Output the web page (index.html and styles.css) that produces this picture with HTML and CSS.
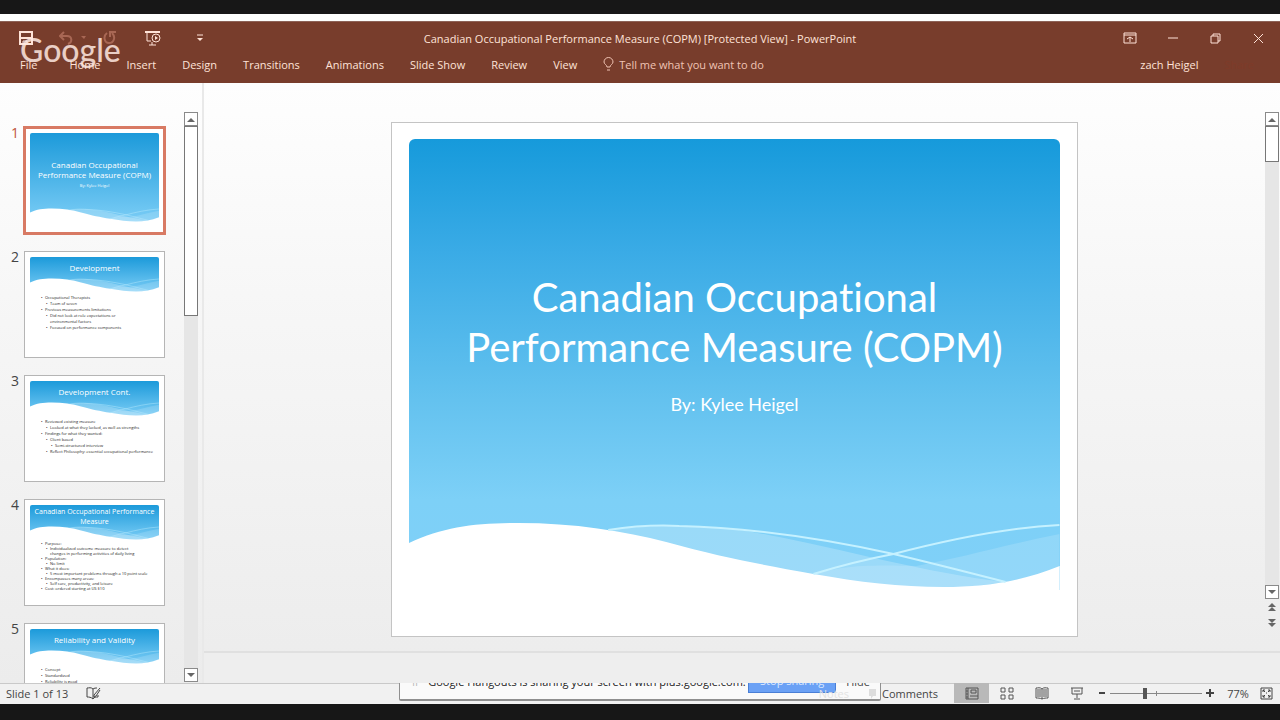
FILE: index.html
```html
<!DOCTYPE html>
<html lang="en">
<head>
    <meta charset="utf-8">
    <title>Canadian Occupational Performance Measure (COPM) - PowerPoint</title>
    <link rel="stylesheet" href="styles.css">
</head>
<body>
    <!-- shared wave at the bottom of every slide banner -->
    <svg class="defs" width="0" height="0" aria-hidden="true">
        <symbol id="wave" viewBox="0 0 650 70" preserveAspectRatio="none">
            <path fill="#ffffff" fill-opacity=".22" d="M199 10C240 5 300 3 359 15C430 28 520 54 596 62L534 70H404Z"/>
            <path fill="#ffffff" fill-opacity=".15" d="M404 54C430 47 450 44 507 46C551 38 600 24 650 14V50L560 70H404Z"/>
            <path fill="#ffffff" d="M-2 24L0 23C35 7 65 3 109 3C165 3 215 11 257 22C315 38 350 44 404 54C450 62 490 67 534 67C575 67 610 62 650 46L653 45V72H-2Z"/>
            <path class="wave-line" d="M199 10C225 6 250 5 270 6C350 8 420 20 484 34C530 45 565 54 596 62"/>
            <path class="wave-line" d="M404 54C430 46 458 39 484 34C530 22 590 8 650 5"/>
        </symbol>
    </svg>

    <header class="ribbon">
        <div class="title-bar">
            <div class="quick-access">
                <button aria-label="Save"><svg width="14" height="14" viewBox="0 0 14 14"><path class="heavy" d="M1 1h12v12H1zM1 7h12"/><path d="M4 13v-3h4v3"/></svg></button>
                <button class="dim" aria-label="Undo"><svg width="28" height="14" viewBox="0 0 28 14"><path class="heavy" d="M5 1L1 5l4 4M2 5h6c5 0 6 6 1 8"/><path class="solid" d="M22 5h5l-2 3z"/></svg></button>
                <button class="dim" aria-label="Redo"><svg width="14" height="14" viewBox="0 0 14 14"><path class="heavy" d="M4 2C0 5 1 12 6 12s7-6 3-10M7 6V1h6"/></svg></button>
                <button aria-label="Start from beginning"><svg width="16" height="15" viewBox="0 0 16 15"><path class="heavy" d="M0 1h15"/><path d="M2 1v9h4M4 14h7M7 11v3"/><circle cx="11" cy="7" r="4"/><path class="solid" d="M10 5l3 2-3 2z"/></svg></button>
                <button aria-label="Customize toolbar"><svg width="6" height="8" viewBox="0 0 6 8"><path d="M0 1h6"/><path class="solid" d="M0 4h6L3 7z"/></svg></button>
            </div>
            <h1>Canadian Occupational Performance Measure (COPM) [Protected View] - PowerPoint</h1>
            <div class="window-buttons">
                <button aria-label="Ribbon options"><svg width="14" height="12" viewBox="0 0 14 12"><path d="M1 1h12v10H1zM1 3h12M7 10V5M4 7l3-2 3 2"/></svg></button>
                <button aria-label="Minimize"><svg width="10" height="10" viewBox="0 0 10 10"><path d="M0 5h10"/></svg></button>
                <button aria-label="Restore"><svg width="11" height="11" viewBox="0 0 11 11"><path d="M1 3h7v7H1zM3 3V1h7v7H8"/></svg></button>
                <button aria-label="Close"><svg width="11" height="11" viewBox="0 0 11 11"><path d="M1 1l9 9M10 1l-9 9"/></svg></button>
            </div>
        </div>
        <nav class="tabs">
            <button class="file">File</button>
            <button>Home</button>
            <button>Insert</button>
            <button>Design</button>
            <button>Transitions</button>
            <button>Animations</button>
            <button>Slide Show</button>
            <button>Review</button>
            <button>View</button>
            <button class="tell-me"><svg width="11" height="14" viewBox="0 0 11 14"><path d="M4 10C4 8 1 7 1 5a4 4 0 0 1 9 0c0 2-3 3-3 5zM4 13h3"/></svg>Tell me what you want to do</button>
            <span class="account">zach Heigel</span>
            <button class="share">Share</button>
        </nav>
        <div class="watermark">Google</div>
    </header>

    <main class="workspace">
        <aside class="slides-panel">
            <ol class="thumbs">
                <li class="active">
                    <span>1</span>
                    <div class="thumb">
                        <div class="banner cover">
                            <h3>Canadian Occupational Performance Measure (COPM)</h3>
                            <p>By: Kylee Heigel</p>
                            <svg class="wave"><use href="#wave"/></svg>
                        </div>
                    </div>
                </li>
                <li>
                    <span>2</span>
                    <div class="thumb">
                        <div class="banner">
                            <h3>Development</h3>
                            <svg class="wave"><use href="#wave"/></svg>
                        </div>
                        <ul>
                            <li>Occupational Therapists
                                <ul><li>Team of seven</li></ul>
                            </li>
                            <li>Previous measurements limitations
                                <ul>
                                    <li>Did not look at role expectations or environmental factors</li>
                                    <li>Focused on performance components</li>
                                </ul>
                            </li>
                        </ul>
                    </div>
                </li>
                <li>
                    <span>3</span>
                    <div class="thumb">
                        <div class="banner">
                            <h3>Development Cont.</h3>
                            <svg class="wave"><use href="#wave"/></svg>
                        </div>
                        <ul>
                            <li>Reviewed existing measure
                                <ul><li>Looked at what they lacked, as well as strengths</li></ul>
                            </li>
                            <li>Findings for what they wanted:
                                <ul>
                                    <li>Client based
                                        <ul><li>Semi-structured interview</li></ul>
                                    </li>
                                    <li class="wide">Reflect Philosophy: essential occupational performance</li>
                                </ul>
                            </li>
                        </ul>
                    </div>
                </li>
                <li>
                    <span>4</span>
                    <div class="thumb dense">
                        <div class="banner">
                            <h3>Canadian Occupational Performance Measure</h3>
                            <svg class="wave"><use href="#wave"/></svg>
                        </div>
                        <ul>
                            <li>Purpose:
                                <ul><li>Individualized outcome measure to detect changes in performing activities of daily living</li></ul>
                            </li>
                            <li>Population:
                                <ul><li>No limit</li></ul>
                            </li>
                            <li>What it does:
                                <ul><li class="wide">5 most important problems through a 10 point scale</li></ul>
                            </li>
                            <li>Encompasses many areas:
                                <ul><li>Self care, productivity, and leisure</li></ul>
                            </li>
                            <li>Cost: ordered starting at US $10</li>
                        </ul>
                    </div>
                </li>
                <li>
                    <span>5</span>
                    <div class="thumb">
                        <div class="banner">
                            <h3>Reliability and Validity</h3>
                            <svg class="wave"><use href="#wave"/></svg>
                        </div>
                        <ul>
                            <li>Concept</li>
                            <li>Standardized</li>
                            <li>Reliability is good</li>
                        </ul>
                    </div>
                </li>
            </ol>
            <div class="scrollbar">
                <button aria-label="Scroll up"><svg width="8" height="5" viewBox="0 0 8 5"><path d="M0 5l4-4 4 4z"/></svg></button>
                <div class="scroll-thumb"></div>
                <button class="down" aria-label="Scroll down"><svg width="8" height="5" viewBox="0 0 8 5"><path d="M0 0l4 4 4-4z"/></svg></button>
            </div>
        </aside>

        <section class="editor">
            <div class="stage">
                <article class="slide">
                    <div class="banner cover">
                        <h2>Canadian Occupational<br>Performance Measure (COPM)</h2>
                        <p>By: Kylee Heigel</p>
                        <svg class="wave"><use href="#wave"/></svg>
                    </div>
                </article>
            </div>
            <div class="stage-scroll">
                <div class="scrollbar">
                    <button aria-label="Scroll up"><svg width="8" height="5" viewBox="0 0 8 5"><path d="M0 5l4-4 4 4z"/></svg></button>
                    <div class="scroll-thumb"></div>
                    <button class="down" aria-label="Scroll down"><svg width="8" height="5" viewBox="0 0 8 5"><path d="M0 0l4 4 4-4z"/></svg></button>
                </div>
                <button aria-label="Previous slide"><svg width="8" height="8" viewBox="0 0 8 8"><path d="M0 4l4-4 4 4zM0 8l4-4 4 4z"/></svg></button>
                <button aria-label="Next slide"><svg width="8" height="8" viewBox="0 0 8 8"><path d="M0 0l4 4 4-4zM0 4l4 4 4-4z"/></svg></button>
            </div>
            <div class="notes"></div>
        </section>
    </main>

    <footer class="status-bar">
        <span>Slide 1 of 13</span>
        <button class="spelling" aria-label="Spelling"><svg width="15" height="13" viewBox="0 0 15 13"><path d="M7 2C5 0 3 1 1 1v9c2 0 4 0 6 2V2c1-1 3-1 4-1M7 12c1-2 3-2 5-2V8"/><path d="M14 1L8 8v2l2-1 4-6"/></svg></button>

        <div class="share-popup">
            <span class="grip">II</span>
            <span class="message">Google Hangouts is sharing your screen with plus.google.com.</span>
            <button class="stop">Stop sharing</button>
            <a href="#">Hide</a>
        </div>

        <div class="status-tools">
            <button class="notes-button">Notes</button>
            <button class="comments"><svg width="8" height="11" viewBox="0 0 8 11"><path class="bubble" d="M0 1h7v7H4l-2 3V8H0z"/></svg>Comments</button>
            <button class="view current" aria-label="Normal"><svg width="14" height="13" viewBox="0 0 14 13"><path d="M1 1h12v11H1zM3 1v11M5 9h8M6 3h5v3H6zM1 4h2M1 7h2M1 10h2"/></svg></button>
            <button class="view" aria-label="Slide sorter"><svg width="14" height="13" viewBox="0 0 14 13"><path d="M1 1h4v4H1zM9 1h4v4H9zM1 8h4v4H1zM9 8h4v4H9z"/></svg></button>
            <button class="view" aria-label="Reading view"><svg width="14" height="13" viewBox="0 0 14 13"><path d="M7 2C5 0 3 1 1 1v10c2 0 4 0 6 1 2-1 4-1 6-1V1c-2 0-4-1-6 1v10M2 3h4M2 5h4M2 7h4M2 9h4M8 3h4M8 5h4M8 7h4M8 9h4"/></svg></button>
            <button class="view" aria-label="Slide show"><svg width="14" height="13" viewBox="0 0 14 13"><path d="M1 1h12M2 1v6h10V1M4 4h6M7 7v4M4 12h6"/></svg></button>
            <button class="zoom-step" aria-label="Zoom out"><svg width="8" height="8" viewBox="0 0 8 8"><path class="thick" d="M1 4h6"/></svg></button>
            <input type="range" min="0" max="100" value="38" aria-label="Zoom">
            <button class="zoom-step" aria-label="Zoom in"><svg width="8" height="8" viewBox="0 0 8 8"><path class="thick" d="M0 4h8M4 0v8"/></svg></button>
            <button class="percent">77%</button>
            <button class="fit" aria-label="Fit slide to window"><svg width="13" height="13" viewBox="0 0 13 13"><path d="M1 1h11v11H1zM3 5V3h2M8 3h2v2M3 8v2h2M8 10h2V8M3 3l2 2M10 3L8 5M3 10l2-2M10 10L8 8M6 6h1"/></svg></button>
        </div>
    </footer>
</body>
</html>
```
FILE: styles.css
```css
* {
    box-sizing: border-box;
}

body {
    margin: 0;
    height: 100vh;
    display: flex;
    flex-direction: column;
    border-top: 14px solid #171717;
    border-bottom: 16px solid #171717;
    background: #fdfffd;
    font-family: "Open Sans", "Noto Sans", sans-serif;
    font-size: 11px;
    color: #444;
    overflow: hidden;
}

button {
    padding: 0;
    border: none;
    background: none;
    font: inherit;
    color: inherit;
    display: flex;
    align-items: center;
    justify-content: center;
    white-space: nowrap;
}

svg {
    fill: none;
    stroke: currentColor;
    flex: none;
}

.defs {
    position: absolute;
}

.solid {
    fill: currentColor;
    stroke: none;
}

.heavy {
    stroke-width: 2;
}

/* ribbon */

.ribbon {
    position: relative;
    margin-top: 7px;
    padding-bottom: 9px;
    background: #783d2c;
    border-top: 1px solid #8d6257;
    color: #ffe3d8;
    flex: none;
}

.title-bar {
    display: grid;
    grid-template-columns: 1fr auto 1fr;
    align-items: center;
    height: 32px;
}

.title-bar h1 {
    margin: 0;
    font-size: 11px;
    font-weight: 400;
}

.quick-access {
    display: grid;
    grid-template-columns: 40px 44px 42px 52px auto;
    justify-content: start;
    align-items: center;
    padding-left: 19px;
}

.quick-access button {
    justify-content: flex-start;
}

.dim {
    color: #a86754;
}

.window-buttons {
    display: flex;
    justify-content: flex-end;
}

.window-buttons button {
    width: 43px;
    height: 24px;
}

.tabs {
    display: flex;
    align-items: center;
    gap: 26px;
    height: 20px;
    padding: 0 26px 0 20px;
}

.file {
    padding-right: 6px;
}

.tell-me {
    gap: 5px;
    color: #f0c4b4;
}

.account {
    margin-left: auto;
}

.share {
    color: #7f3b29;
}

.watermark {
    position: absolute;
    left: 20px;
    top: 8px;
    font-family: Lato, sans-serif;
    font-size: 32px;
    font-weight: 500;
    line-height: 40px;
    color: #ffe9e2;
    opacity: 0.85;
}

/* workspace */

.workspace {
    flex: 1;
    min-height: 0;
    display: grid;
    grid-template-columns: 204px 1fr;
    background: linear-gradient(#fefefe, #f6f6f6 40%, #ececec);
}

.slides-panel {
    display: flex;
    justify-content: space-between;
    min-height: 0;
    padding-right: 4px;
    border-right: 2px solid #e9e9e9;
}

.thumbs {
    list-style: none;
    margin: 0;
    padding: 44px 0 0 11px;
    display: flex;
    flex-direction: column;
    gap: 17px;
    overflow: hidden;
}

.thumbs > li {
    display: grid;
    grid-template-columns: 13px 141px;
    padding-right: 2px;
}

.thumbs > li > span {
    font-size: 14px;
    line-height: 12px;
}

.active > span {
    color: #c0553a;
}

.thumb {
    height: 107px;
    padding: 5px;
    background: #fff;
    border: 1px solid #b5b5b5;
    overflow: hidden;
}

.active .thumb {
    outline: 3px solid #d87a64;
    outline-offset: -2px;
}

.banner {
    position: relative;
    height: 35px;
    border-radius: 2px 2px 0 0;
    background: linear-gradient(#1c9ada, #7bcdf6);
    color: #fff;
    text-align: center;
}

.banner h3 {
    margin: 0;
    padding-top: 6px;
    font-size: 8px;
    line-height: 10px;
    font-weight: 400;
}

.dense .banner h3 {
    padding-top: 2px;
    font-size: 7px;
}

.thumb .cover {
    height: 89px;
}

.thumb .cover h3 {
    padding-top: 27px;
}

.thumb .cover p {
    margin: 3px 0 0;
    font-size: 4px;
    line-height: 6px;
}

.wave {
    position: absolute;
    left: 0;
    bottom: 0;
    width: 100%;
    height: 14px;
    stroke: none;
}

.wave-line {
    fill: none;
    stroke: #c5f1ff;
    stroke-width: 2;
}

.thumb ul {
    list-style: none;
    margin: 0;
    padding-left: 5px;
    font-size: 4px;
    line-height: 6px;
    color: #222;
}

.thumb > ul {
    padding: 3px 0 0 15px;
}

.thumb ul ul li {
    padding-right: 18px;
}

.thumb ul ul ul li,
.thumb ul ul .wide {
    padding-right: 0;
}

.thumb ul li::before {
    content: "•";
    display: inline-block;
    width: 4px;
    margin-left: -4px;
}

.dense > ul {
    padding-top: 1px;
}

.dense ul,
.dense ul ul {
    line-height: 5px;
}

/* scrollbars */

.scrollbar {
    width: 14px;
    margin: 29px 0 1px;
    display: flex;
    flex-direction: column;
    background: #e6e6e6;
}

.scrollbar svg,
.stage-scroll svg {
    fill: #666;
    stroke: none;
}

.scrollbar button {
    height: 14px;
    background: #fff;
    border: 1px solid #8a8a8a;
}

.scrollbar .down {
    margin-top: auto;
}

.scroll-thumb {
    height: 190px;
    background: #fff;
    border: 1px solid #777;
}

/* editor */

.editor {
    display: grid;
    grid-template-columns: 1fr 15px;
    grid-template-rows: 1fr 32px;
    min-height: 0;
}

.stage {
    display: flex;
    justify-content: center;
    padding: 39px 0 14px;
    min-height: 0;
}

.slide {
    height: 100%;
    aspect-ratio: 4 / 3;
    padding: 16px 17px;
    background: #fff;
    border: 1px solid #c4c4c4;
}

.slide .banner {
    height: 451px;
    border-radius: 6px 6px 0 0;
    background: linear-gradient(#169adb, #3aabe6 25%, #64c2ef 58%, #7dd0f7 80%, #80d0f8);
}

.slide h2 {
    margin: 0;
    padding-top: 133px;
    font-family: Lato, sans-serif;
    font-size: 40px;
    line-height: 50px;
    font-weight: 400;
    font-variant-ligatures: none;
}

.slide p {
    margin: 20px 0 0;
    font-family: Lato, sans-serif;
    font-size: 18px;
    line-height: 24px;
}

.slide .wave {
    height: 70px;
}

.stage-scroll {
    display: flex;
    flex-direction: column;
    padding: 0 1px 20px 0;
}

.stage-scroll .scrollbar {
    flex: 1;
    margin-bottom: 0;
}

.stage-scroll .scroll-thumb {
    height: 36px;
}

.stage-scroll > button {
    height: 16px;
}

.notes {
    grid-column: 1 / -1;
    border-top: 2px solid #e0e0e0;
    background: #eeeeee;
}

/* status bar */

.status-bar {
    position: relative;
    flex: none;
    display: flex;
    align-items: center;
    height: 21px;
    padding: 0 0 2px 6px;
    background: #f1f1f1;
    border-top: 1px solid #c9c9c9;
}

.spelling {
    margin-left: 18px;
}

.share-popup {
    position: absolute;
    top: -1px;
    bottom: 3px;
    left: 399px;
    width: 482px;
    display: flex;
    align-items: flex-end;
    gap: 10px;
    padding: 0 10px 6px 12px;
    background: #fafafa;
    border: 1px solid #8f8f8f;
    border-top: none;
    border-bottom: 2px solid #8f8f8f;
    border-radius: 0 0 2px 2px;
    overflow: hidden;
    line-height: 15px;
    color: #222;
    white-space: nowrap;
}

.share-popup .grip,
.share-popup .message,
.share-popup a {
    padding-bottom: 4px;
}

.share-popup .grip {
    color: #bbb;
}

.share-popup .message {
    flex: 1;
    min-width: 0;
}

.share-popup .stop {
    flex: none;
    width: 88px;
    height: 24px;
    padding-bottom: 2px;
    background: #6ba1f5;
    border: 1px solid #4a7fd6;
    color: #dbe9ff;
}

.share-popup a {
    color: #444;
    text-decoration: none;
}

.status-tools {
    position: relative;
    display: flex;
    align-items: center;
    margin-left: auto;
    padding-right: 6px;
}

.notes-button {
    margin-right: 20px;
    color: #e3e3e3;
}

.comments {
    gap: 5px;
    margin-right: 16px;
}

.bubble {
    fill: #ddd;
    stroke: none;
}

.view {
    width: 35px;
    height: 20px;
    color: #555;
}

.current {
    background: #b9b9b9;
}

.thick {
    stroke-width: 2;
}

.zoom-step {
    width: 16px;
}

input[type="range"] {
    appearance: none;
    width: 92px;
    height: 12px;
    margin: 0;
    background:
        linear-gradient(#888, #888) 50% 50% / 1px 5px no-repeat,
        linear-gradient(#888, #888) 50% 50% / 100% 1px no-repeat;
}

input[type="range"]::-webkit-slider-thumb {
    appearance: none;
    width: 4px;
    height: 11px;
    background: #555;
}

.percent {
    width: 40px;
}

.fit {
    width: 16px;
}
```
